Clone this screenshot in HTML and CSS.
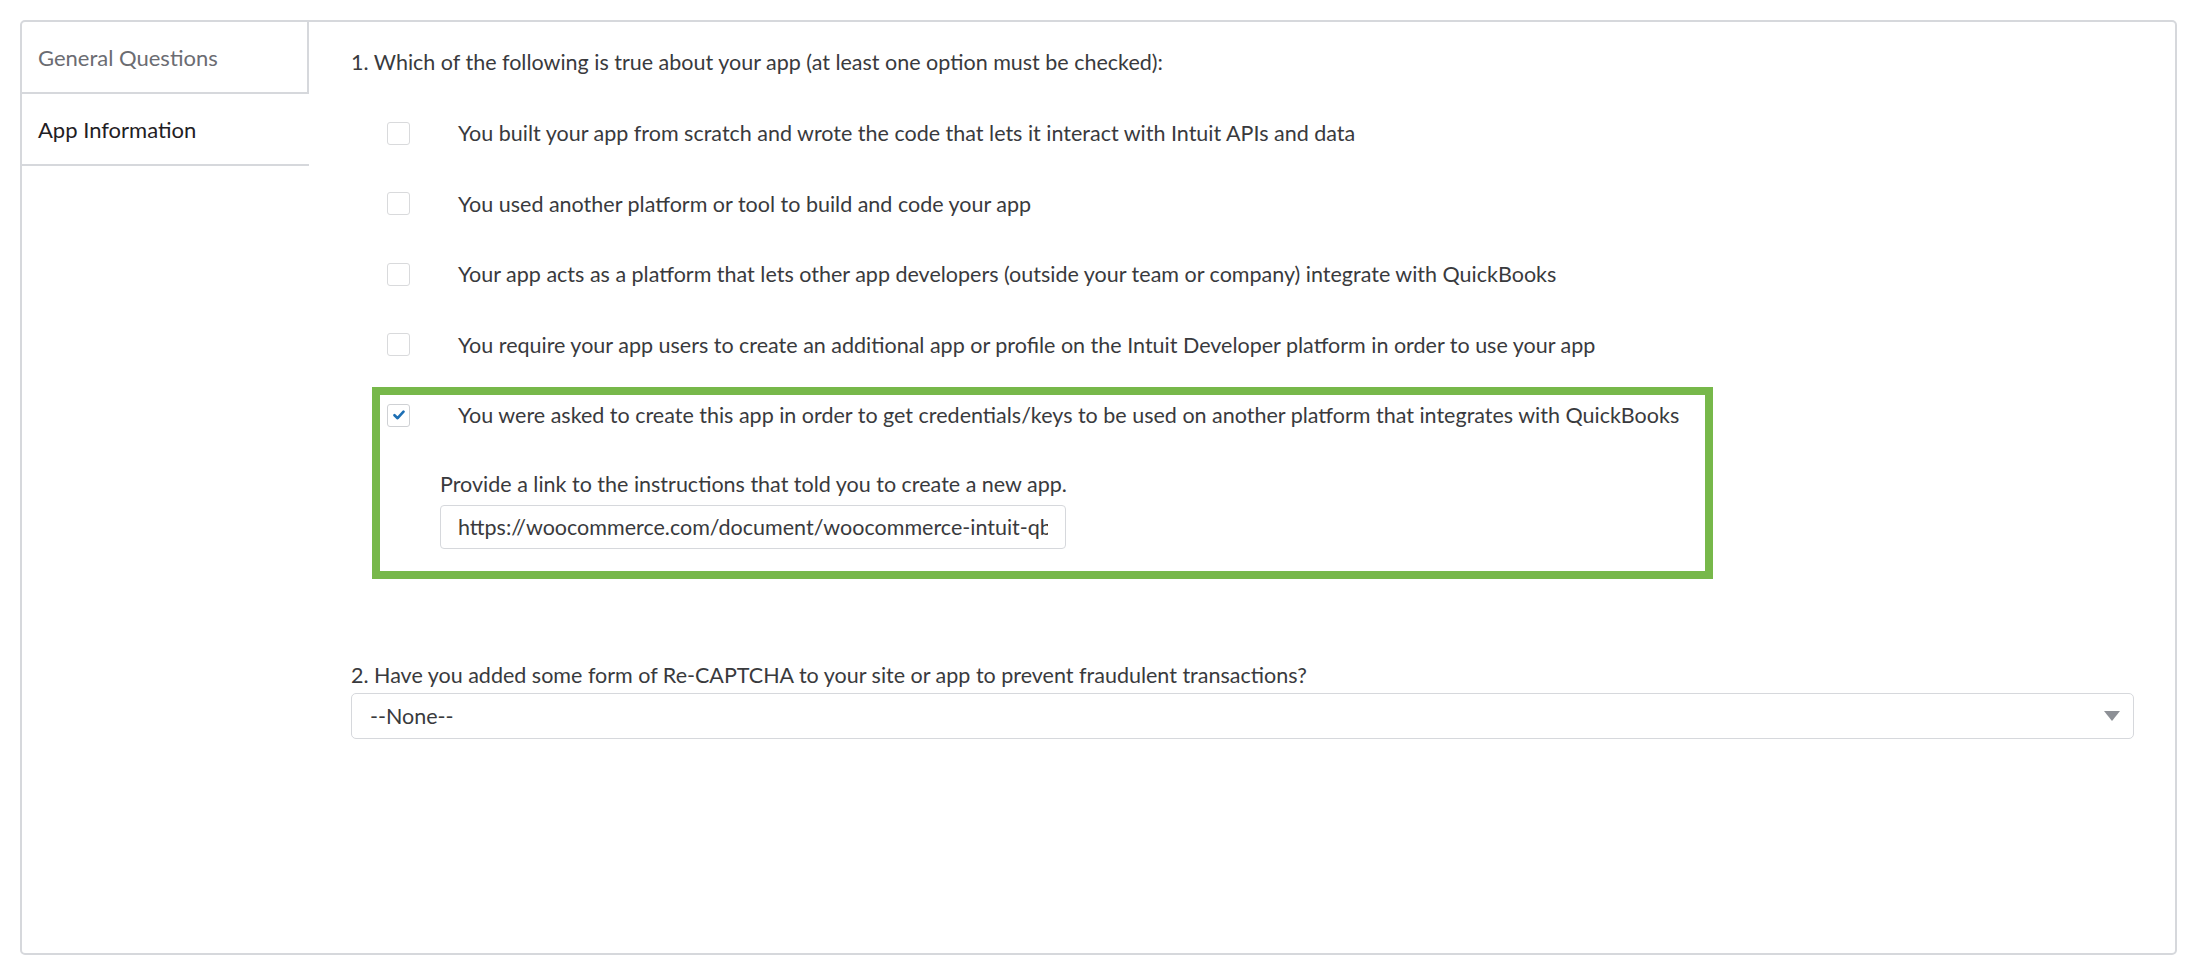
FILE: index.html
```html
<!DOCTYPE html>
<html lang="en">
<head>
    <meta charset="UTF-8">
    <title>App Information</title>
    <link rel="stylesheet" href="styles.css">
</head>
<body>
    <div class="card">
        <nav class="side">
            <div class="tab">General Questions</div>
            <div class="tab active">App Information</div>
        </nav>
        <main class="content">
            <p class="question">1. Which of the following is true about your app (at least one option must be checked):</p>
            <ul class="options">
                <li class="option"><span class="box"></span><span>You built your app from scratch and wrote the code that lets it interact with Intuit APIs and data</span></li>
                <li class="option"><span class="box"></span><span>You used another platform or tool to build and code your app</span></li>
                <li class="option"><span class="box"></span><span>Your app acts as a platform that lets other app developers (outside your team or company) integrate with QuickBooks</span></li>
                <li class="option"><span class="box"></span><span>You require your app users to create an additional app or profile on the Intuit Developer platform in order to use your app</span></li>
            </ul>
            <div class="highlight">
                <div class="option">
                    <span class="box checked">
                        <svg width="12" height="10" viewBox="0 0 12 10"><path d="M1.5 5.2 L4.6 8.2 L10.5 1.6" fill="none" stroke="#1d6fb4" stroke-width="2.6" stroke-linecap="round" stroke-linejoin="round"/></svg>
                    </span>
                    <span>You were asked to create this app in order to get credentials/keys to be used on another platform that integrates with QuickBooks</span>
                </div>
                <div class="subfield">
                    <label class="sublabel" for="link">Provide a link to the instructions that told you to create a new app.</label>
                    <input class="input" id="link" type="text" value="https://woocommerce.com/document/woocommerce-intuit-qbms/">
                </div>
            </div>
            <p class="question q2">2. Have you added some form of Re-CAPTCHA to your site or app to prevent fraudulent transactions?</p>
            <div class="select">
                <span>--None--</span>
                <span class="arrow"></span>
            </div>
        </main>
    </div>
</body>
</html>
```

FILE: styles.css
```css
*{padding:0; margin:0; list-style:none; box-sizing:border-box;}
:root{
    --border:#d6d8dc;
    --text:#393a3d;
    --muted:#6b6c72;
    --green:#77b84a;
}
html,body{width:100%; height:100%; background:#fff;}
body{
    padding:20px 23px 16px 20px;
    font-family:Lato, "Open Sans", sans-serif;
    font-size:21.5px;
    color:var(--text);
}

.card{
    display:flex;
    height:935px;
    border:2px solid var(--border);
    border-radius:5px;
    overflow:hidden;
}

/* left tabs */
.side{width:287px; flex:none;}
.tab{
    height:72px;
    display:flex; align-items:center;
    padding-left:16px;
    border-bottom:2px solid var(--border);
    color:var(--muted);
    font-size:22px;
}
.tab:first-child{border-right:2px solid var(--border);}
.tab.active{color:#1f2024;}

/* right side */
.content{flex:1; padding:25px 0 0 42px;}
.question{line-height:30px; white-space:nowrap;}

.options{padding-top:21px;}
.option{
    display:flex; align-items:center;
    height:70.5px;
    padding-left:36px;
    white-space:nowrap;
}
.box{
    width:23px; height:23px; flex:none;
    border:1.5px solid #d9dadc;
    border-radius:3px;
    margin-right:48px;
    display:flex; align-items:center; justify-content:center;
}
.box.checked{border-color:#cfd1d4;}

.highlight{
    width:1341px;
    margin:7px 0 0 21px;
    border:8px solid var(--green);
    padding:0 0 22px 7px;
}
.highlight .option{padding-left:0; height:40px;}
.subfield{padding:34px 0 0 53px;}
.sublabel{display:block; line-height:30px;}
.input{
    display:block;
    width:626px; height:44px;
    margin-top:6px;
    border:1.5px solid var(--border);
    border-radius:4px;
    padding:0 17px;
    font:inherit; color:var(--text);
    background:#fff;
    outline:none;
}

.q2{margin-top:81px;}
.select{
    width:1783px; height:46px;
    margin-top:3px;
    border:1.5px solid var(--border);
    border-radius:5px;
    display:flex; align-items:center; justify-content:space-between;
    padding:0 13px 0 18px;
}
.arrow{
    width:0; height:0;
    border-left:8px solid transparent;
    border-right:8px solid transparent;
    border-top:10px solid #8d9096;
}
```
